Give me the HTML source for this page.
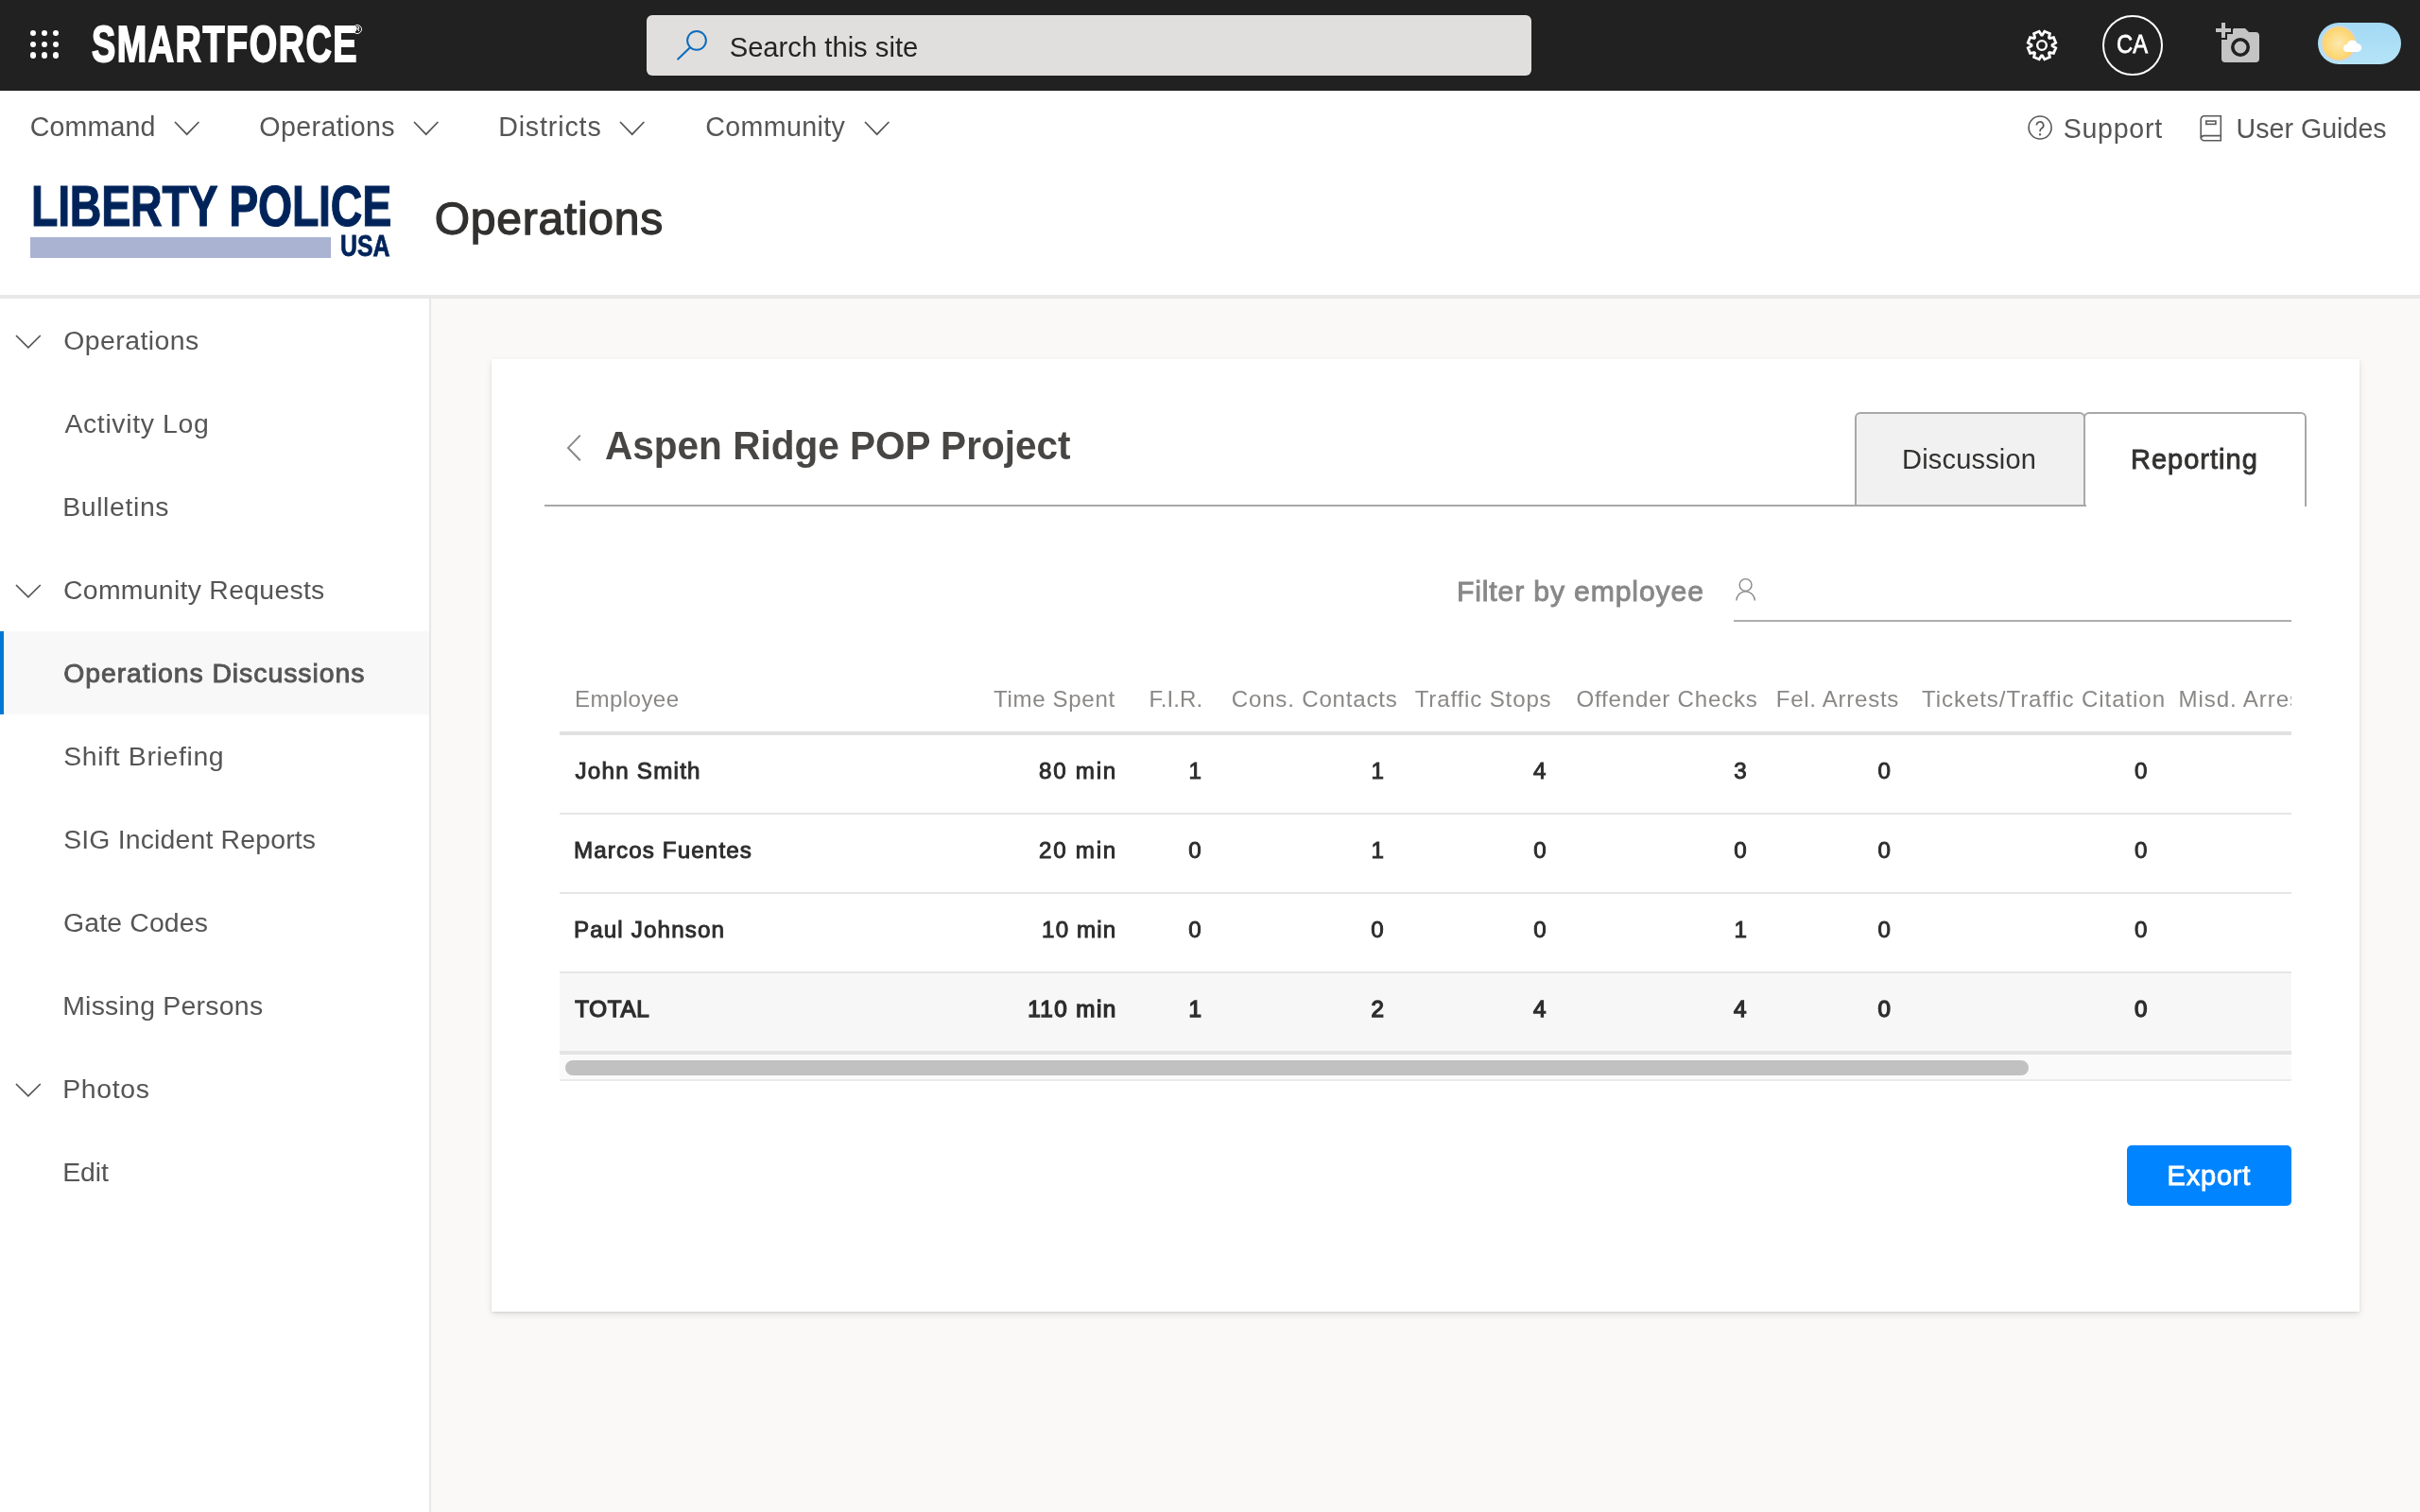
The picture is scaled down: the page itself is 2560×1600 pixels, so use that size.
<!DOCTYPE html>
<html><head><meta charset="utf-8"><title>Operations - Aspen Ridge POP Project</title>
<style>
html,body{margin:0;padding:0;width:2560px;height:1600px;overflow:hidden;background:#faf9f8;font-family:"Liberation Sans",sans-serif;}
#root{position:absolute;left:0;top:0;width:2560px;height:1600px;overflow:hidden;will-change:transform;-webkit-font-smoothing:antialiased;}
</style></head><body>
<div id="root">
<div style="position:absolute;left:0px;top:0px;width:2560px;height:96px;background:#212121;"></div>
<div style="position:absolute;left:31.6px;top:31.5px;width:6.6px;height:6.6px;border-radius:50%;background:#fff"></div>
<div style="position:absolute;left:31.6px;top:43.5px;width:6.6px;height:6.6px;border-radius:50%;background:#fff"></div>
<div style="position:absolute;left:31.6px;top:55.4px;width:6.6px;height:6.6px;border-radius:50%;background:#fff"></div>
<div style="position:absolute;left:43.5px;top:31.5px;width:6.6px;height:6.6px;border-radius:50%;background:#fff"></div>
<div style="position:absolute;left:43.5px;top:43.5px;width:6.6px;height:6.6px;border-radius:50%;background:#fff"></div>
<div style="position:absolute;left:43.5px;top:55.4px;width:6.6px;height:6.6px;border-radius:50%;background:#fff"></div>
<div style="position:absolute;left:55.5px;top:31.5px;width:6.6px;height:6.6px;border-radius:50%;background:#fff"></div>
<div style="position:absolute;left:55.5px;top:43.5px;width:6.6px;height:6.6px;border-radius:50%;background:#fff"></div>
<div style="position:absolute;left:55.5px;top:55.4px;width:6.6px;height:6.6px;border-radius:50%;background:#fff"></div>
<div style="position:absolute;left:96.5px;top:16.1px;height:60px;line-height:60px;font-size:54px;font-weight:bold;color:#fff;white-space:nowrap;transform-origin:0 0;transform:scaleX(0.70);letter-spacing:2.2px;-webkit-text-stroke:1.9px #fff;">SMARTFORCE</div>
<div style="position:absolute;left:373px;top:26px;width:10px;height:10px;border-radius:50%;border:1.5px solid #fff;box-sizing:border-box;font-size:7px;line-height:7px;color:#fff;text-align:center;font-weight:bold">R</div>
<div style="position:absolute;left:684px;top:16px;width:936px;height:64px;background:#e1dfdd;border-radius:6px;"></div>
<svg style="position:absolute;left:710px;top:26px" width="44" height="44" viewBox="0 0 44 44"><circle cx="27" cy="16.85" r="9.9" fill="none" stroke="#0f6cbd" stroke-width="2.0"/><line x1="20" y1="24.2" x2="7.2" y2="36.6" stroke="#0f6cbd" stroke-width="2.1" stroke-linecap="round"/></svg>
<div style="position:absolute;top:36.20px;line-height:29.2px;font-size:29.2px;color:#242424;letter-spacing:0.005px;white-space:nowrap;left:771.67px;">Search this site</div>
<svg style="position:absolute;left:2136px;top:23.65px" width="48" height="48" viewBox="0 0 48 48"><path d="M24.48 13.01 L26.86 9.28 L32.39 11.56 L31.43 15.89 L32.11 16.57 L36.44 15.61 L38.72 21.14 L34.99 23.52 L34.99 24.48 L38.72 26.86 L36.44 32.39 L32.11 31.43 L31.43 32.11 L32.39 36.44 L26.86 38.72 L24.48 34.99 L23.52 34.99 L21.14 38.72 L15.61 36.44 L16.57 32.11 L15.89 31.43 L11.56 32.39 L9.28 26.86 L13.01 24.48 L13.01 23.52 L9.28 21.14 L11.56 15.61 L15.89 16.57 L16.57 15.89 L15.61 11.56 L21.14 9.28 L23.52 13.01Z" fill="none" stroke="#fff" stroke-width="2.8" stroke-linejoin="miter"/><circle cx="24" cy="24" r="4.85" fill="none" stroke="#fff" stroke-width="2.4"/></svg>
<div style="position:absolute;left:2224px;top:16px;width:64px;height:64px;border:2px solid #fff;border-radius:50%;box-sizing:border-box;"></div>
<div style="position:absolute;left:2239px;top:33px;line-height:28px;font-size:28px;color:#fff;white-space:nowrap;transform-origin:0 0;transform:scaleX(0.85);-webkit-text-stroke:0.8px #fff;">CA</div>
<svg style="position:absolute;left:2340px;top:20px" width="56" height="52" viewBox="0 0 56 52"><path d="M12 14h8l3-4h12l4 4h7a4 4 0 0 1 4 4v24a4 4 0 0 1-4 4H14a4 4 0 0 1-4-4V16z" fill="#c4c4c4"/><circle cx="30" cy="30" r="8.2" fill="none" stroke="#212121" stroke-width="3.6"/><rect x="2" y="6" width="20" height="10" fill="#212121"/><rect x="8" y="0" width="8" height="22" fill="#212121"/><rect x="10" y="4" width="4" height="16" fill="#c4c4c4"/><rect x="4" y="10" width="16" height="4" fill="#c4c4c4"/></svg>
<svg style="position:absolute;left:2452px;top:24px" width="88" height="44" viewBox="0 0 88 44"><defs><radialGradient id="sun" cx="0.5" cy="0.5" r="0.5"><stop offset="0" stop-color="#fde9b0"/><stop offset="0.6" stop-color="#fddc85"/><stop offset="1" stop-color="#fdd36b"/></radialGradient><linearGradient id="sky" x1="0" y1="0" x2="0" y2="1"><stop offset="0" stop-color="#a3d9f5"/><stop offset="1" stop-color="#b5e4f7"/></linearGradient></defs><rect x="0" y="0" width="88" height="44" rx="22" fill="url(#sky)"/><circle cx="22" cy="22" r="19" fill="#cfd6e3"/><circle cx="22" cy="22" r="17.4" fill="url(#sun)"/><path d="M31 31a4 4 0 0 1 0-8a5.5 5.5 0 0 1 10.5-1a4 4 0 0 1 0.5 9z" fill="#fff"/></svg>
<div style="position:absolute;left:0px;top:96px;width:2560px;height:216px;background:#ffffff;"></div>
<div style="position:absolute;top:119.80px;line-height:28.6px;font-size:28.6px;color:#555555;letter-spacing:0.132px;white-space:nowrap;left:31.75px;">Command</div>
<svg style="position:absolute;left:183.1px;top:127px" width="29.4" height="17.2" viewBox="0 0 29.4 17.2"><polyline points="2,2 14.7,15.2 27.4,2" fill="none" stroke="#555555" stroke-width="1.7"/></svg>
<div style="position:absolute;top:119.80px;line-height:28.6px;font-size:28.6px;color:#555555;letter-spacing:0.368px;white-space:nowrap;left:274.35px;">Operations</div>
<svg style="position:absolute;left:436.1px;top:127px" width="29.4" height="17.2" viewBox="0 0 29.4 17.2"><polyline points="2,2 14.7,15.2 27.4,2" fill="none" stroke="#555555" stroke-width="1.7"/></svg>
<div style="position:absolute;top:119.80px;line-height:28.6px;font-size:28.6px;color:#555555;letter-spacing:0.865px;white-space:nowrap;left:527.15px;">Districts</div>
<svg style="position:absolute;left:654.2px;top:127px" width="29.4" height="17.2" viewBox="0 0 29.4 17.2"><polyline points="2,2 14.7,15.2 27.4,2" fill="none" stroke="#555555" stroke-width="1.7"/></svg>
<div style="position:absolute;top:119.80px;line-height:28.6px;font-size:28.6px;color:#555555;letter-spacing:0.364px;white-space:nowrap;left:746.25px;">Community</div>
<svg style="position:absolute;left:912.5px;top:127px" width="29.4" height="17.2" viewBox="0 0 29.4 17.2"><polyline points="2,2 14.7,15.2 27.4,2" fill="none" stroke="#555555" stroke-width="1.7"/></svg>
<svg style="position:absolute;left:2143px;top:120px" width="30" height="30" viewBox="0 0 30 30"><circle cx="15.1" cy="15" r="12.0" fill="none" stroke="#5a5a5a" stroke-width="1.6"/><path d="M11.4 12.6a3.65 3.65 0 1 1 5.5 3.1c-1.2 0.7-1.8 1.4-1.8 2.7v0.8" fill="none" stroke="#5a5a5a" stroke-width="1.7"/><rect x="14" y="21.3" width="2.1" height="2.1" fill="#5a5a5a"/></svg>
<div style="position:absolute;top:121.90px;line-height:28.6px;font-size:28.6px;color:#555555;letter-spacing:0.725px;white-space:nowrap;left:2182.70px;">Support</div>
<svg style="position:absolute;left:2325px;top:120px" width="28" height="32" viewBox="0 0 28 32"><path d="M24.3 2.8H6.7A3.5 3.5 0 0 0 3.2 6.3V25.2A3.5 3.5 0 0 0 6.7 28.7H24.3Z" fill="none" stroke="#5a5a5a" stroke-width="1.6"/><path d="M3.2 26.6A3.4 3.4 0 0 1 6.7 23.6H24.3" fill="none" stroke="#5a5a5a" stroke-width="1.6"/><rect x="8.8" y="8.1" width="10.1" height="3.3" fill="none" stroke="#5a5a5a" stroke-width="1.6"/></svg>
<div style="position:absolute;top:121.90px;line-height:28.6px;font-size:28.6px;color:#555555;letter-spacing:0.012px;white-space:nowrap;left:2365.59px;">User Guides</div>
<div style="position:absolute;left:33px;top:188px;height:60px;line-height:60px;font-size:62px;font-weight:bold;color:#00245a;white-space:nowrap;transform-origin:0 0;transform:scaleX(0.75);-webkit-text-stroke:1.2px #00245a;letter-spacing:-0.3px;">LIBERTY POLICE</div>
<div style="position:absolute;left:32px;top:251px;width:318px;height:22px;background:#aab3d2;"></div>
<div style="position:absolute;left:360px;top:245px;height:32px;line-height:32px;font-size:31px;font-weight:bold;color:#00245a;white-space:nowrap;transform-origin:0 0;transform:scaleX(0.80);-webkit-text-stroke:0.8px #00245a;">USA</div>
<div style="position:absolute;top:208.00px;line-height:48px;font-size:48px;color:#323130;letter-spacing:0.746px;white-space:nowrap;-webkit-text-stroke:1.3px #323130;left:459.73px;">Operations</div>
<div style="position:absolute;left:0px;top:312px;width:2560px;height:4px;background:#e8e8e8;"></div>
<div style="position:absolute;left:0px;top:316px;width:454px;height:1284px;background:#ffffff;"></div>
<div style="position:absolute;left:454px;top:316px;width:2px;height:1284px;background:#e8e8e8;"></div>
<div style="position:absolute;left:456px;top:316px;width:2104px;height:1284px;background:#faf9f8;"></div>
<div style="position:absolute;top:345.90px;line-height:28.4px;font-size:28.4px;color:#555555;letter-spacing:0.476px;white-space:nowrap;left:67.15px;">Operations</div>
<svg style="position:absolute;left:15px;top:353.1px" width="29.8" height="16.8" viewBox="0 0 29.8 16.8"><polyline points="2,2 14.9,14.8 27.8,2" fill="none" stroke="#555555" stroke-width="1.7"/></svg>
<div style="position:absolute;top:433.90px;line-height:28.4px;font-size:28.4px;color:#555555;letter-spacing:0.647px;white-space:nowrap;left:68.44px;">Activity Log</div>
<div style="position:absolute;top:521.90px;line-height:28.4px;font-size:28.4px;color:#555555;letter-spacing:0.630px;white-space:nowrap;left:66.17px;">Bulletins</div>
<div style="position:absolute;top:609.90px;line-height:28.4px;font-size:28.4px;color:#555555;letter-spacing:0.287px;white-space:nowrap;left:67.06px;">Community Requests</div>
<svg style="position:absolute;left:15px;top:617.1px" width="29.8" height="16.8" viewBox="0 0 29.8 16.8"><polyline points="2,2 14.9,14.8 27.8,2" fill="none" stroke="#555555" stroke-width="1.7"/></svg>
<div style="position:absolute;left:0px;top:668px;width:454px;height:88px;background:#f8f8f8;"></div>
<div style="position:absolute;left:0px;top:668px;width:4px;height:88px;background:#0078d4;"></div>
<div style="position:absolute;top:697.90px;line-height:28.4px;font-size:28.4px;color:#555555;letter-spacing:0.954px;white-space:nowrap;-webkit-text-stroke:0.9px #555555;left:67.15px;">Operations Discussions</div>
<div style="position:absolute;top:785.90px;line-height:28.4px;font-size:28.4px;color:#555555;letter-spacing:0.650px;white-space:nowrap;left:67.21px;">Shift Briefing</div>
<div style="position:absolute;top:873.90px;line-height:28.4px;font-size:28.4px;color:#555555;letter-spacing:0.173px;white-space:nowrap;left:67.21px;">SIG Incident Reports</div>
<div style="position:absolute;top:961.90px;line-height:28.4px;font-size:28.4px;color:#555555;letter-spacing:0.149px;white-space:nowrap;left:67.07px;">Gate Codes</div>
<div style="position:absolute;top:1049.90px;line-height:28.4px;font-size:28.4px;color:#555555;letter-spacing:0.262px;white-space:nowrap;left:66.17px;">Missing Persons</div>
<div style="position:absolute;top:1137.90px;line-height:28.4px;font-size:28.4px;color:#555555;letter-spacing:0.693px;white-space:nowrap;left:66.17px;">Photos</div>
<svg style="position:absolute;left:15px;top:1145.1px" width="29.8" height="16.8" viewBox="0 0 29.8 16.8"><polyline points="2,2 14.9,14.8 27.8,2" fill="none" stroke="#555555" stroke-width="1.7"/></svg>
<div style="position:absolute;top:1225.90px;line-height:28.4px;font-size:28.4px;color:#555555;letter-spacing:-0.061px;white-space:nowrap;left:66.17px;">Edit</div>
<div style="position:absolute;left:520px;top:380px;width:1976px;height:1008px;background:#fff;box-shadow:0 3.2px 7.2px rgba(0,0,0,0.10),0 0.6px 1.8px rgba(0,0,0,0.08);"></div>
<svg style="position:absolute;left:596px;top:456px" width="24" height="36" viewBox="0 0 24 36"><polyline points="17.8,4.6 5,17.9 17.8,31.2" fill="none" stroke="#8a8886" stroke-width="2"/></svg>
<div style="position:absolute;top:449.80px;line-height:43px;font-size:43px;color:#484644;font-weight:bold;letter-spacing:0.000px;white-space:nowrap;transform:scaleX(0.9426);transform-origin:0 0;left:639.99px;">Aspen Ridge POP Project</div>
<div style="position:absolute;left:1962px;top:436px;width:244px;height:100px;background:#f1f1f1;border:2px solid #a8a8a8;border-bottom:none;border-radius:6px 6px 0 0;box-sizing:border-box;"></div>
<div style="position:absolute;left:2204px;top:436px;width:236px;height:100px;background:#fff;border:2px solid #a8a8a8;border-bottom:none;border-radius:6px 6px 0 0;box-sizing:border-box;"></div>
<div style="position:absolute;left:576px;top:534px;width:1631px;height:2px;background:#a8a8a8;"></div>
<div style="position:absolute;top:471.80px;line-height:29px;font-size:29px;color:#323130;letter-spacing:0.171px;white-space:nowrap;left:2012.12px;">Discussion</div>
<div style="position:absolute;top:471.80px;line-height:29px;font-size:29px;color:#323130;letter-spacing:1.000px;white-space:nowrap;-webkit-text-stroke:0.9px #323130;left:2254.02px;">Reporting</div>
<div style="position:absolute;top:610.80px;line-height:30.2px;font-size:30.2px;color:#888888;letter-spacing:0.846px;white-space:nowrap;-webkit-text-stroke:0.9px #888888;left:1540.92px;">Filter by employee</div>
<svg style="position:absolute;left:1832px;top:609px" width="30" height="30" viewBox="0 0 30 30"><circle cx="14.6" cy="10" r="6.4" fill="none" stroke="#8a8886" stroke-width="1.4"/><path d="M4.9 26.6A9.7 9.7 0 0 1 24.3 26.6" fill="none" stroke="#8a8886" stroke-width="1.4"/></svg>
<div style="position:absolute;left:1834px;top:656px;width:590px;height:2px;background:#b0aeac;"></div>
<div style="position:absolute;top:727.80px;line-height:24.1px;font-size:24.1px;color:#8a8886;letter-spacing:0.415px;white-space:nowrap;left:608.02px;">Employee</div>
<div style="position:absolute;top:727.80px;line-height:24.1px;font-size:24.1px;color:#8a8886;letter-spacing:0.656px;white-space:nowrap;right:1380.17px;text-align:right;">Time Spent</div>
<div style="position:absolute;top:727.80px;line-height:24.1px;font-size:24.1px;color:#8a8886;letter-spacing:0.069px;white-space:nowrap;left:1215.62px;">F.I.R.</div>
<div style="position:absolute;top:727.80px;line-height:24.1px;font-size:24.1px;color:#8a8886;letter-spacing:0.798px;white-space:nowrap;left:1302.78px;">Cons. Contacts</div>
<div style="position:absolute;top:727.80px;line-height:24.1px;font-size:24.1px;color:#8a8886;letter-spacing:0.842px;white-space:nowrap;left:1496.66px;">Traffic Stops</div>
<div style="position:absolute;top:727.80px;line-height:24.1px;font-size:24.1px;color:#8a8886;letter-spacing:0.782px;white-space:nowrap;left:1667.56px;">Offender Checks</div>
<div style="position:absolute;top:727.80px;line-height:24.1px;font-size:24.1px;color:#8a8886;letter-spacing:0.709px;white-space:nowrap;left:1878.72px;">Fel. Arrests</div>
<div style="position:absolute;top:727.80px;line-height:24.1px;font-size:24.1px;color:#8a8886;letter-spacing:0.909px;white-space:nowrap;left:2033.06px;">Tickets/Traffic Citation</div>
<div style="position:absolute;left:2300px;top:720px;width:124px;height:40px;overflow:hidden;"><div style="position:absolute;left:4.52px;top:8.40px;line-height:24.1px;font-size:24.1px;color:#8a8886;white-space:nowrap;letter-spacing:0.9px">Misd. Arrests</div></div>
<div style="position:absolute;left:592px;top:774px;width:1832px;height:4px;background:#e1e1e1;"></div>
<div style="position:absolute;top:803.80px;line-height:24.2px;font-size:24.2px;color:#2d2d2d;letter-spacing:1.228px;white-space:nowrap;-webkit-text-stroke:0.95px #2d2d2d;left:608.52px;">John Smith</div>
<div style="position:absolute;top:803.80px;line-height:24.2px;font-size:24.2px;color:#2d2d2d;letter-spacing:1.723px;white-space:nowrap;-webkit-text-stroke:0.95px #2d2d2d;right:1378.01px;text-align:right;">80 min</div>
<div style="position:absolute;top:803.80px;line-height:24.2px;font-size:24.2px;color:#2d2d2d;letter-spacing:0.000px;white-space:nowrap;-webkit-text-stroke:0.95px #2d2d2d;right:1289.12px;text-align:right;">1</div>
<div style="position:absolute;top:803.80px;line-height:24.2px;font-size:24.2px;color:#2d2d2d;letter-spacing:0.000px;white-space:nowrap;-webkit-text-stroke:0.95px #2d2d2d;right:1096.12px;text-align:right;">1</div>
<div style="position:absolute;top:803.80px;line-height:24.2px;font-size:24.2px;color:#2d2d2d;letter-spacing:0.000px;white-space:nowrap;-webkit-text-stroke:0.95px #2d2d2d;right:924.59px;text-align:right;">4</div>
<div style="position:absolute;top:803.80px;line-height:24.2px;font-size:24.2px;color:#2d2d2d;letter-spacing:0.000px;white-space:nowrap;-webkit-text-stroke:0.95px #2d2d2d;right:712.24px;text-align:right;">3</div>
<div style="position:absolute;top:803.80px;line-height:24.2px;font-size:24.2px;color:#2d2d2d;letter-spacing:0.000px;white-space:nowrap;-webkit-text-stroke:0.95px #2d2d2d;right:560.05px;text-align:right;">0</div>
<div style="position:absolute;top:803.80px;line-height:24.2px;font-size:24.2px;color:#2d2d2d;letter-spacing:0.000px;white-space:nowrap;-webkit-text-stroke:0.95px #2d2d2d;right:288.65px;text-align:right;">0</div>
<div style="position:absolute;left:592px;top:860px;width:1832px;height:2px;background:#e6e6e6;"></div>
<div style="position:absolute;top:887.80px;line-height:24.2px;font-size:24.2px;color:#2d2d2d;letter-spacing:1.126px;white-space:nowrap;-webkit-text-stroke:0.95px #2d2d2d;left:606.91px;">Marcos Fuentes</div>
<div style="position:absolute;top:887.80px;line-height:24.2px;font-size:24.2px;color:#2d2d2d;letter-spacing:1.716px;white-space:nowrap;-webkit-text-stroke:0.95px #2d2d2d;right:1378.01px;text-align:right;">20 min</div>
<div style="position:absolute;top:887.80px;line-height:24.2px;font-size:24.2px;color:#2d2d2d;letter-spacing:0.000px;white-space:nowrap;-webkit-text-stroke:0.95px #2d2d2d;right:1289.35px;text-align:right;">0</div>
<div style="position:absolute;top:887.80px;line-height:24.2px;font-size:24.2px;color:#2d2d2d;letter-spacing:0.000px;white-space:nowrap;-webkit-text-stroke:0.95px #2d2d2d;right:1096.12px;text-align:right;">1</div>
<div style="position:absolute;top:887.80px;line-height:24.2px;font-size:24.2px;color:#2d2d2d;letter-spacing:0.000px;white-space:nowrap;-webkit-text-stroke:0.95px #2d2d2d;right:924.35px;text-align:right;">0</div>
<div style="position:absolute;top:887.80px;line-height:24.2px;font-size:24.2px;color:#2d2d2d;letter-spacing:0.000px;white-space:nowrap;-webkit-text-stroke:0.95px #2d2d2d;right:712.35px;text-align:right;">0</div>
<div style="position:absolute;top:887.80px;line-height:24.2px;font-size:24.2px;color:#2d2d2d;letter-spacing:0.000px;white-space:nowrap;-webkit-text-stroke:0.95px #2d2d2d;right:560.05px;text-align:right;">0</div>
<div style="position:absolute;top:887.80px;line-height:24.2px;font-size:24.2px;color:#2d2d2d;letter-spacing:0.000px;white-space:nowrap;-webkit-text-stroke:0.95px #2d2d2d;right:288.65px;text-align:right;">0</div>
<div style="position:absolute;left:592px;top:944px;width:1832px;height:2px;background:#e6e6e6;"></div>
<div style="position:absolute;top:971.80px;line-height:24.2px;font-size:24.2px;color:#2d2d2d;letter-spacing:1.144px;white-space:nowrap;-webkit-text-stroke:0.95px #2d2d2d;left:606.91px;">Paul Johnson</div>
<div style="position:absolute;top:971.80px;line-height:24.2px;font-size:24.2px;color:#2d2d2d;letter-spacing:1.121px;white-space:nowrap;-webkit-text-stroke:0.95px #2d2d2d;right:1378.61px;text-align:right;">10 min</div>
<div style="position:absolute;top:971.80px;line-height:24.2px;font-size:24.2px;color:#2d2d2d;letter-spacing:0.000px;white-space:nowrap;-webkit-text-stroke:0.95px #2d2d2d;right:1289.35px;text-align:right;">0</div>
<div style="position:absolute;top:971.80px;line-height:24.2px;font-size:24.2px;color:#2d2d2d;letter-spacing:0.000px;white-space:nowrap;-webkit-text-stroke:0.95px #2d2d2d;right:1096.35px;text-align:right;">0</div>
<div style="position:absolute;top:971.80px;line-height:24.2px;font-size:24.2px;color:#2d2d2d;letter-spacing:0.000px;white-space:nowrap;-webkit-text-stroke:0.95px #2d2d2d;right:924.35px;text-align:right;">0</div>
<div style="position:absolute;top:971.80px;line-height:24.2px;font-size:24.2px;color:#2d2d2d;letter-spacing:0.000px;white-space:nowrap;-webkit-text-stroke:0.95px #2d2d2d;right:712.12px;text-align:right;">1</div>
<div style="position:absolute;top:971.80px;line-height:24.2px;font-size:24.2px;color:#2d2d2d;letter-spacing:0.000px;white-space:nowrap;-webkit-text-stroke:0.95px #2d2d2d;right:560.05px;text-align:right;">0</div>
<div style="position:absolute;top:971.80px;line-height:24.2px;font-size:24.2px;color:#2d2d2d;letter-spacing:0.000px;white-space:nowrap;-webkit-text-stroke:0.95px #2d2d2d;right:288.65px;text-align:right;">0</div>
<div style="position:absolute;left:592px;top:1028px;width:1832px;height:2px;background:#e6e6e6;"></div>
<div style="position:absolute;left:592px;top:1030px;width:1832px;height:82px;background:#f7f7f7;"></div>
<div style="position:absolute;top:1055.80px;line-height:24.2px;font-size:24.2px;color:#2d2d2d;letter-spacing:0.632px;white-space:nowrap;-webkit-text-stroke:1.35px #2d2d2d;left:608.36px;">TOTAL</div>
<div style="position:absolute;top:1055.80px;line-height:24.2px;font-size:24.2px;color:#2d2d2d;letter-spacing:1.475px;white-space:nowrap;-webkit-text-stroke:1.35px #2d2d2d;right:1378.25px;text-align:right;">110 min</div>
<div style="position:absolute;top:1055.80px;line-height:24.2px;font-size:24.2px;color:#2d2d2d;letter-spacing:0.000px;white-space:nowrap;-webkit-text-stroke:1.35px #2d2d2d;right:1289.12px;text-align:right;">1</div>
<div style="position:absolute;top:1055.80px;line-height:24.2px;font-size:24.2px;color:#2d2d2d;letter-spacing:0.000px;white-space:nowrap;-webkit-text-stroke:1.35px #2d2d2d;right:1096.08px;text-align:right;">2</div>
<div style="position:absolute;top:1055.80px;line-height:24.2px;font-size:24.2px;color:#2d2d2d;letter-spacing:0.000px;white-space:nowrap;-webkit-text-stroke:1.35px #2d2d2d;right:924.59px;text-align:right;">4</div>
<div style="position:absolute;top:1055.80px;line-height:24.2px;font-size:24.2px;color:#2d2d2d;letter-spacing:0.000px;white-space:nowrap;-webkit-text-stroke:1.35px #2d2d2d;right:712.59px;text-align:right;">4</div>
<div style="position:absolute;top:1055.80px;line-height:24.2px;font-size:24.2px;color:#2d2d2d;letter-spacing:0.000px;white-space:nowrap;-webkit-text-stroke:1.35px #2d2d2d;right:560.05px;text-align:right;">0</div>
<div style="position:absolute;top:1055.80px;line-height:24.2px;font-size:24.2px;color:#2d2d2d;letter-spacing:0.000px;white-space:nowrap;-webkit-text-stroke:1.35px #2d2d2d;right:288.65px;text-align:right;">0</div>
<div style="position:absolute;left:592px;top:1112px;width:1832px;height:4px;background:#e4e4e4;"></div>
<div style="position:absolute;left:592px;top:1116px;width:1832px;height:26px;background:#fafafa;"></div>
<div style="position:absolute;left:592px;top:1142px;width:1832px;height:2px;background:#ebebeb;"></div>
<div style="position:absolute;left:598px;top:1122px;width:1548px;height:16px;background:#c1c1c1;border-radius:8px;"></div>
<div style="position:absolute;left:2250px;top:1212px;width:174px;height:64px;background:#0084ff;border-radius:5px;"></div>
<div style="position:absolute;top:1230.00px;line-height:29px;font-size:29px;color:#ffffff;letter-spacing:0.773px;white-space:nowrap;-webkit-text-stroke:0.9px #ffffff;left:2292.62px;">Export</div>
</div>
</body></html>
